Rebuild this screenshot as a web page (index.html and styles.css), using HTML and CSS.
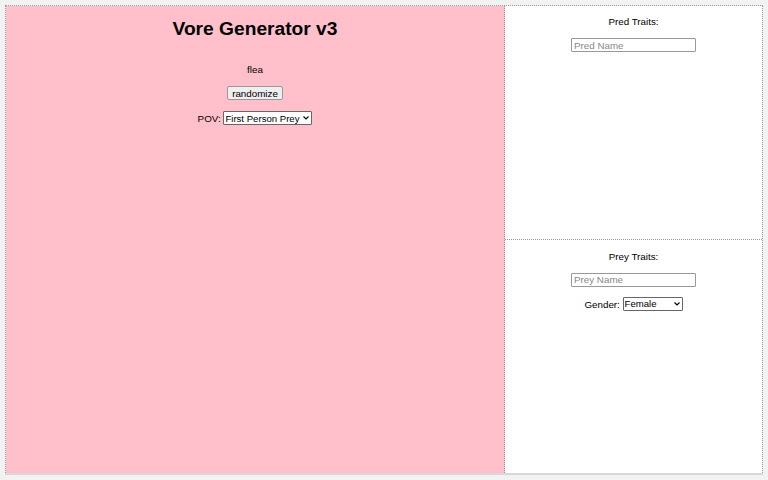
FILE: index.html
```html
<!DOCTYPE html>
<html>
<head>
    <title>Vore Generator v3</title>
    <link rel="stylesheet" href="styles.css">
</head>
<body>
    <div id="container">
        <div id="story">
            <h1>Vore Generator v3</h1>
            <p id="result">flea</p>
            <p><button id="randomize">randomize</button></p>
            <p>
                <label for="pov">POV:</label>
                <select id="pov">
                    <option>First Person Prey</option>
                    <option>First Person Pred</option>
                    <option>Third Person</option>
                </select>
            </p>
        </div>
        <div id="traits">
            <div class="traitBox">
                <p>Pred Traits:</p>
                <input type="text" id="predName" placeholder="Pred Name">
            </div>
            <div class="traitBox">
                <p>Prey Traits:</p>
                <input type="text" id="preyName" placeholder="Prey Name">
                <p class="gender">
                    <label for="preyGender">Gender:</label>
                    <select id="preyGender">
                        <option>Female</option>
                        <option>Male</option>
                        <option>Other</option>
                    </select>
                </p>
            </div>
        </div>
    </div>
</body>
</html>
```

FILE: styles.css
```css
body {
    font-family: "Liberation Sans", Arial, sans-serif;
    font-size: 9.8px;
    margin: 5px;
    background-color: #f2f2f2;
    color: #000;
}

#container {
    display: flex;
    height: 470px;
    border: 1px dotted #999;
    border-bottom: 2px solid #d8d8d8;
    box-sizing: border-box;
}

#story {
    width: 498px;
    background-color: pink;
    text-align: center;
    border-right: 1px dotted #999;
}

h1 {
    font-size: 19.2px;
    margin: 12px 0 0 0;
}

p {
    margin: 0;
}

#result {
    margin-top: 24px;
}

#story p + p {
    margin-top: 11px;
}

#traits {
    flex: 1;
    display: flex;
    flex-direction: column;
    background-color: #fff;
}

.traitBox {
    flex: 1;
    text-align: center;
    padding-top: 10px;
}

.traitBox + .traitBox {
    border-top: 1px dotted #999;
    padding-top: 11px;
}

input[type="text"] {
    width: 125px;
    height: 14px;
    box-sizing: border-box;
    margin-top: 11px;
    padding: 0 2px;
    font-family: inherit;
    font-size: 9.8px;
    border: 1px solid #999;
    border-radius: 1px;
}

input::placeholder {
    color: #888;
}

.gender {
    margin-top: 10px;
}

button {
    font-family: inherit;
    font-size: 9.8px;
    height: 14px;
    padding: 0 4px;
    border: 1px solid #999;
    border-radius: 2px;
    background-color: #efefef;
}

/* small chevron instead of the big native arrow */
select {
    appearance: none;
    -webkit-appearance: none;
    font-family: inherit;
    font-size: 9.6px;
    color: #000;
    height: 14px;
    padding: 0 8px 0 1px;
    border: 1px solid #666;
    border-radius: 1px;
    background: #fff url("data:image/svg+xml,%3Csvg xmlns='http://www.w3.org/2000/svg' width='6' height='4' viewBox='0 0 6 4'%3E%3Cpath d='M0.5 0.5 L3 3 L5.5 0.5' fill='none' stroke='%23000' stroke-width='1.2'/%3E%3C/svg%3E") no-repeat right 2px center;
    text-align: left;
}

#pov {
    width: 89px;
}

#preyGender {
    width: 60px;
}
```
